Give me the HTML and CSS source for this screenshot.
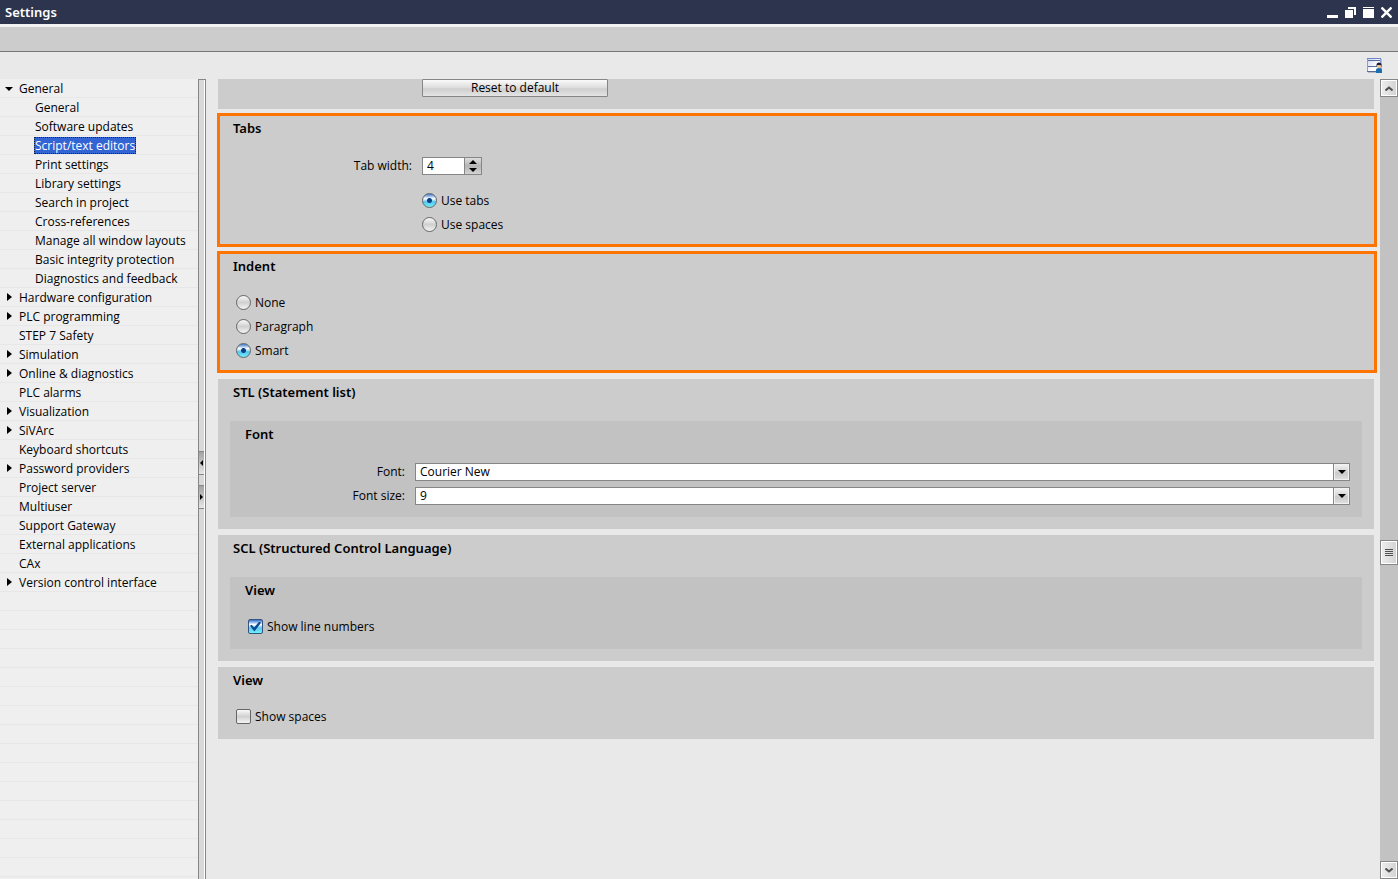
FILE: index.html
```html
<!DOCTYPE html>
<html lang="en">
<head>
  <meta charset="utf-8">
  <title>Settings</title>
  <link rel="stylesheet" href="styles.css">
</head>
<body>
  <header class="titlebar">
    <h1>Settings</h1>
    <div class="window-controls">
      <button type="button" aria-label="Minimize"><svg viewBox="0 0 11 11"><path d="M0 8h11v3H0z"/></svg></button>
      <button type="button" aria-label="Restore"><svg viewBox="0 0 11 11"><path d="M3 0h8v8H9V2H3zM0 3h8v8H0z"/></svg></button>
      <button type="button" aria-label="Maximize"><svg viewBox="0 0 11 11"><path d="M0 0h11v1H0zM0 2h11v9H0z"/></svg></button>
      <button type="button" aria-label="Close"><svg viewBox="0 0 11 11"><path d="M.5.5l10 10M10.500.5l-10 10" stroke="#fff" stroke-width="2.4"/></svg></button>
    </div>
  </header>
  <div class="toolbar"></div>
  <div class="subbar">
    <button type="button" class="layout-btn" aria-label="Save window settings">
      <svg viewBox="0 0 16 16">
        <defs>
          <linearGradient id="sheet" x1="0" y1="0" x2="1" y2="1"><stop offset="0" stop-color="#c9d4f4"/><stop offset=".6" stop-color="#fff"/></linearGradient>
        </defs>
        <path d="M1 1h14v14H1z" fill="#b9bcc4"/>
        <path d="M.5.5h13v13H.5z" fill="url(#sheet)" stroke="#8d9fd6"/>
        <path d="M0 0h14v1H0z" fill="#6c84cc"/>
        <path d="M1 2.500h12M1 8.500h9M0 13.500h10" stroke="#5a6a96"/>
        <circle cx="12" cy="8" r="2.300" fill="#e9c39c"/>
        <path d="M9.500 9V7q0-2.500 2.500-2.500T14.500 7v2l-1-2h-3z" fill="#1c1c38"/>
        <path d="M9 15v-3q0-2 3-2t3 2v3z" fill="#1b6fae"/>
      </svg>
    </button>
  </div>

  <div class="workspace">
    <nav class="tree" aria-label="Settings categories">
      <ul>
        <li><button type="button" class="toggle open" aria-label="Collapse General"></button><a href="#">General</a>
          <ul>
            <li><a href="#">General</a></li>
            <li><a href="#">Software updates</a></li>
            <li><a href="#" class="selected">Script/text editors</a></li>
            <li><a href="#">Print settings</a></li>
            <li><a href="#">Library settings</a></li>
            <li><a href="#">Search in project</a></li>
            <li><a href="#">Cross-references</a></li>
            <li><a href="#">Manage all window layouts</a></li>
            <li><a href="#">Basic integrity protection</a></li>
            <li><a href="#">Diagnostics and feedback</a></li>
          </ul>
        </li>
        <li><button type="button" class="toggle" aria-label="Expand Hardware configuration"></button><a href="#">Hardware configuration</a></li>
        <li><button type="button" class="toggle" aria-label="Expand PLC programming"></button><a href="#">PLC programming</a></li>
        <li><a href="#">STEP 7 Safety</a></li>
        <li><button type="button" class="toggle" aria-label="Expand Simulation"></button><a href="#">Simulation</a></li>
        <li><button type="button" class="toggle" aria-label="Expand Online &amp; diagnostics"></button><a href="#">Online &amp; diagnostics</a></li>
        <li><a href="#">PLC alarms</a></li>
        <li><button type="button" class="toggle" aria-label="Expand Visualization"></button><a href="#">Visualization</a></li>
        <li><button type="button" class="toggle" aria-label="Expand SiVArc"></button><a href="#">SiVArc</a></li>
        <li><a href="#">Keyboard shortcuts</a></li>
        <li><button type="button" class="toggle" aria-label="Expand Password providers"></button><a href="#">Password providers</a></li>
        <li><a href="#">Project server</a></li>
        <li><a href="#">Multiuser</a></li>
        <li><a href="#">Support Gateway</a></li>
        <li><a href="#">External applications</a></li>
        <li><a href="#">CAx</a></li>
        <li><button type="button" class="toggle" aria-label="Expand Version control interface"></button><a href="#">Version control interface</a></li>
      </ul>
    </nav>

    <div class="splitter">
      <button type="button" aria-label="Collapse left"><svg viewBox="0 0 5 8"><path d="M4 1v6L1 4z"/></svg></button>
      <button type="button" aria-label="Collapse right"><svg viewBox="0 0 5 8"><path d="M1 1v6l3-3z"/></svg></button>
    </div>

    <main class="content">
      <section class="section reset-section">
        <button type="button" class="reset-btn">Reset to default</button>
      </section>

      <section class="section highlight">
        <h2>Tabs</h2>
        <div class="field-row">
          <label for="tabWidth">Tab width:</label>
          <div class="spinner">
            <input type="text" id="tabWidth" value="4">
            <div class="spin-buttons">
              <button type="button" aria-label="Increase"><svg viewBox="0 0 8 4"><path d="M4 0l4 4H0z"/></svg></button>
              <button type="button" aria-label="Decrease"><svg viewBox="0 0 8 4"><path d="M0 0h8L4 4z"/></svg></button>
            </div>
          </div>
        </div>
        <div class="options tab-options">
          <label><input type="radio" name="tabs" checked>Use tabs</label>
          <label><input type="radio" name="tabs">Use spaces</label>
        </div>
      </section>

      <section class="section highlight">
        <h2>Indent</h2>
        <div class="options">
          <label><input type="radio" name="indent">None</label>
          <label><input type="radio" name="indent">Paragraph</label>
          <label><input type="radio" name="indent" checked>Smart</label>
        </div>
      </section>

      <section class="section group">
        <h2>STL (Statement list)</h2>
        <div class="subsection">
          <h3>Font</h3>
          <div class="field-row">
            <label for="fontName">Font:</label>
            <div class="dropdown">
              <select id="fontName"><option>Courier New</option></select>
              <span class="arrow"><svg viewBox="0 0 8 4"><path d="M0 0h8L4 4z"/></svg></span>
            </div>
          </div>
          <div class="field-row">
            <label for="fontSize">Font size:</label>
            <div class="dropdown">
              <select id="fontSize"><option>9</option></select>
              <span class="arrow"><svg viewBox="0 0 8 4"><path d="M0 0h8L4 4z"/></svg></span>
            </div>
          </div>
        </div>
      </section>

      <section class="section group">
        <h2>SCL (Structured Control Language)</h2>
        <div class="subsection">
          <h3>View</h3>
          <div class="options">
            <label><input type="checkbox" checked>Show line numbers</label>
          </div>
        </div>
      </section>

      <section class="section">
        <h2>View</h2>
        <div class="options">
          <label><input type="checkbox">Show spaces</label>
        </div>
      </section>
    </main>

    <div class="scrollbar">
      <button type="button" aria-label="Scroll up"><svg viewBox="0 0 8 5"><path d="M.5 4.500L4 1.500l3.500 3"/></svg></button>
      <div class="track-before"></div>
      <div class="thumb"><svg viewBox="0 0 8 8"><path d="M0 .5h8M0 2.500h8M0 4.500h8M0 6.500h8"/></svg></div>
      <div class="track-after"></div>
      <button type="button" aria-label="Scroll down"><svg viewBox="0 0 8 5"><path d="M.5.5L4 3.500l3.500-3"/></svg></button>
    </div>
  </div>
</body>
</html>
```
FILE: styles.css
```css
:root {
  --title-bg: #2d344d;
  --page-bg: #e9e9e9;
  --panel-bg: #cccccc;
  --subpanel-bg: #c2c2c2;
  --tree-bg: #efefef;
  --border: #868686;
  --highlight: #ff7300;
  --selection: #3264d4;
  --face: linear-gradient(#f4f4f4, #d2d2d2 50%, #c9c9c9 55%, #e2e2e2);
}

* {
  box-sizing: border-box;
}

body {
  margin: 0;
  height: 100vh;
  display: flex;
  flex-direction: column;
  overflow: hidden;
  background-color: var(--page-bg);
  color: #000;
  font-family: "Open Sans", "Noto Sans", sans-serif;
  font-size: 12px;
  line-height: 18px;
}

button, input, select {
  font: inherit;
  color: inherit;
  margin: 0;
  padding: 0;
}

button {
  border: none;
  background: none;
}

svg {
  display: block;
}

h1, h2, h3 {
  margin: 0;
  font-family: "Noto Sans", sans-serif;
  font-size: 13px;
  font-weight: 600;
}

/* Title bar and toolbars */
.titlebar {
  display: flex;
  align-items: center;
  justify-content: space-between;
  flex: none;
  height: 24px;
  padding: 0 6px 0 5px;
  background-color: var(--title-bg);
  color: #fff;
}
.window-controls {
  display: flex;
  gap: 7px;
}
.window-controls svg {
  width: 11px;
  height: 11px;
  fill: #fff;
}
.toolbar {
  flex: none;
  height: 28px;
  background-color: var(--panel-bg);
  border-top: 3px solid #f1f1f1;
  border-bottom: 1px solid #777;
}
.subbar {
  display: flex;
  align-items: center;
  justify-content: flex-end;
  flex: none;
  height: 27px;
  padding-right: 15px;
}
.layout-btn svg {
  width: 16px;
  height: 16px;
}

.workspace {
  flex: 1;
  min-height: 0;
  display: flex;
}

/* Category tree */
.tree {
  flex: none;
  width: 198px;
  overflow: hidden;
  background: repeating-linear-gradient(var(--tree-bg) 0 18px, #e7e7e7 18px 19px);
}
.tree ul {
  list-style: none;
  margin: 0;
  padding: 0;
}
.tree li {
  position: relative;
  padding-left: 18px;
  line-height: 20px;
}
.tree li li {
  padding-left: 16px;
}
.tree a {
  display: block;
  width: fit-content;
  height: 19px;
  padding: 0 1px;
  color: inherit;
  text-decoration: none;
  white-space: nowrap;
}
.tree .selected {
  height: 17px;
  margin: 1px 0;
  padding: 0;
  border: 1px dotted #222;
  background-color: var(--selection);
  color: #fff;
  line-height: 16px;
}
.toggle {
  position: absolute;
  top: 5px;
  left: 7px;
  border-left: 5px solid #000;
  border-top: 4px solid transparent;
  border-bottom: 4px solid transparent;
}
.toggle.open {
  top: 8px;
  left: 5px;
  border-top: 4px solid #000;
  border-left: 4px solid transparent;
  border-right: 4px solid transparent;
  border-bottom: none;
}

/* Splitter between tree and content */
.splitter {
  flex: none;
  width: 8px;
  display: flex;
  flex-direction: column;
  justify-content: center;
  gap: 10px;
  background-color: #d8d8d8;
  border: 1px solid var(--border);
  border-bottom: none;
  box-shadow: inset -1px 0 #fff;
}
.splitter button {
  height: 24px;
  width: 5px;
  background: linear-gradient(#a2a2a2, #e6e6e6);
  border-top: 1px solid var(--border);
  border-bottom: 1px solid var(--border);
}
.splitter svg {
  width: 5px;
  height: 8px;
}

/* Settings sections */
.content {
  flex: 1;
  min-width: 0;
  overflow: hidden;
  display: flex;
  flex-direction: column;
  gap: 6px;
  padding: 0 6px 0 12px;
}
.section {
  position: relative;
  flex: none;
  padding-bottom: 10px;
  background-color: var(--panel-bg);
}
.section h2, .section h3 {
  margin-bottom: 12px;
  padding-left: 15px;
  line-height: 26px;
}
.highlight::after {
  content: "";
  position: absolute;
  inset: -2px -3px 0 -1px;
  border: 3px solid var(--highlight);
  pointer-events: none;
}
.reset-section {
  padding: 0 0 12px 204px;
}
.reset-btn {
  display: block;
  width: 186px;
  height: 18px;
  border: 1px solid var(--border);
  border-radius: 1px;
  background: linear-gradient(#fafafa, #dcdcdc 50%, #cecece 55%, #e4e4e4);
  line-height: 16px;
}
.group {
  padding: 0 12px 12px;
}
.group h2 {
  margin-bottom: 16px;
  padding-left: 3px;
}
.subsection {
  padding-bottom: 10px;
  background-color: var(--subpanel-bg);
}

.field-row {
  display: grid;
  grid-template-columns: 194px 1fr;
  gap: 10px;
  align-items: center;
  height: 24px;
  padding-top: 2px;
}
.subsection .field-row {
  grid-template-columns: 175px 1fr;
  padding-right: 12px;
}
.field-row label {
  text-align: right;
}

.spinner {
  display: flex;
  width: 60px;
  height: 18px;
  border: 1px solid var(--border);
  background-color: #fff;
}
.spinner input {
  flex: 1;
  min-width: 0;
  padding-left: 4px;
  border: none;
  background: none;
  outline: none;
}
.spin-buttons {
  display: flex;
  flex-direction: column;
  width: 17px;
  border-left: 1px solid var(--border);
  background: linear-gradient(#dedede, #b4b4b4 50%, #d4d4d4);
}
.spin-buttons button {
  flex: 1;
  display: flex;
  align-items: center;
  justify-content: center;
}
.spin-buttons svg, .arrow svg {
  width: 8px;
  height: 4px;
}

.dropdown {
  position: relative;
  height: 18px;
}
.dropdown select {
  display: block;
  width: 100%;
  height: 18px;
  padding: 0 20px 0 4px;
  appearance: none;
  border: 1px solid var(--border);
  border-radius: 0;
  background-color: #fff;
  line-height: 16px;
}
.arrow {
  position: absolute;
  top: 0;
  right: 0;
  display: flex;
  align-items: center;
  justify-content: center;
  width: 17px;
  height: 18px;
  border: 1px solid var(--border);
  background: var(--face);
  box-shadow: inset 0 0 0 1px #f2f2f2;
  pointer-events: none;
}

/* Radios and check boxes */
.options {
  padding-left: 18px;
}
.options label {
  display: flex;
  align-items: center;
  gap: 4px;
  width: fit-content;
  height: 24px;
  padding-bottom: 1px;
}
.tab-options {
  margin-top: 12px;
  padding-left: 204px;
}
.options input {
  appearance: none;
  width: 15px;
  height: 15px;
  border: 1px solid #666;
  border-radius: 2px;
  background: linear-gradient(#fafafa, #d0d0d0 50%, #f4f4f4);
}
.options input[type="radio"] {
  border-radius: 50%;
}
.options input[type="radio"]:checked {
  background:
    radial-gradient(circle, #0b3f83 0 2px, transparent 3px),
    linear-gradient(#3a78d0, #ffffff 35%, #57c4ee 60%, #6ff0fa);
}
.options input[type="checkbox"]:checked {
  display: grid;
  place-items: center;
  border-color: #35567c;
  background: linear-gradient(#2d6fd0, #ffffff 35%, #62c5f0 60%, #6ff0fa);
}
.options input[type="checkbox"]:checked::after {
  content: "";
  width: 11px;
  height: 10px;
  background-color: #0b4a92;
  clip-path: polygon(0 42%, 14% 32%, 38% 60%, 84% 0, 100% 12%, 40% 100%);
}

/* Scroll bar */
.scrollbar {
  flex: none;
  width: 18px;
  display: flex;
  flex-direction: column;
  background-color: var(--subpanel-bg);
}
.scrollbar button, .thumb {
  flex: none;
  display: flex;
  align-items: center;
  justify-content: center;
  height: 18px;
  border: 1px solid var(--border);
  background: linear-gradient(90deg, #eee, #d2d2d2);
  box-shadow: inset 0 0 0 1px #fff;
}
.scrollbar .thumb {
  height: 25px;
}
.track-before {
  flex: 3;
}
.track-after {
  flex: 2;
}
.scrollbar svg {
  width: 8px;
  fill: none;
  stroke: #505050;
  stroke-width: 2;
}
.scrollbar .thumb svg {
  stroke-width: 1;
}
```
